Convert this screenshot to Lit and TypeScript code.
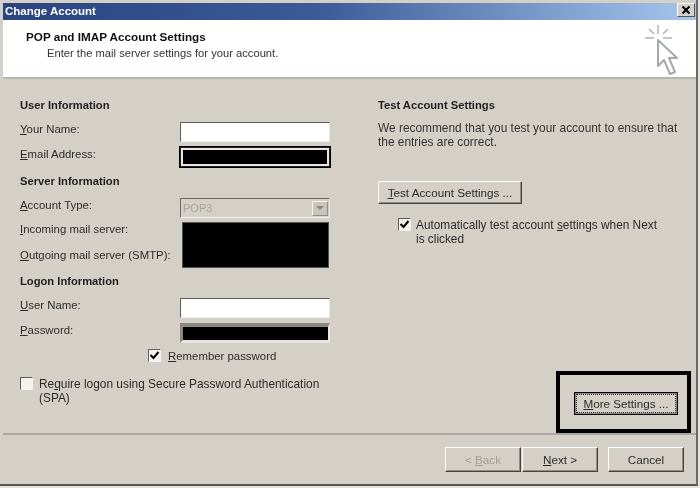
import { LitElement, html, css } from "lit";
import { customElement } from "lit/decorators.js";

const check = html`<svg viewBox="0 0 13 13" width="13" height="13"><path d="M2.5 6l3 3 5-6" fill="none" stroke="#000" stroke-width="2"/></svg>`;

@customElement("app-root")
export class AppRoot extends LitElement {
  static styles = css`
    :host { display: block; width: 700px; height: 488px; overflow: hidden; background: #e4e2dc; }
    * { box-sizing: border-box; }
    .win {
      width: 698px; height: 486px; display: flex; flex-direction: column;
      padding: 3px 0 2px 3px; background: #d4d0c8; border-right: 2px solid #6e6c68; border-bottom: 2px solid #55534f;
      font: 11.4px/14px "Liberation Sans", Arial, sans-serif; color: #2b2b2b; filter: blur(0.4px);
    }
    u { text-decoration: underline; text-underline-offset: 1px; }
    .title {
      height: 17px; flex: none; display: flex; align-items: center; justify-content: space-between; padding: 0 1px 0 2px;
      background: linear-gradient(90deg, #2a4480 0%, #3a5a98 45%, #a6c6ee 100%);
      color: #fff; font-weight: bold; font-size: 11.5px;
    }
    .title > span:first-child { padding-bottom: 2px; }
    .close {
      width: 18px; height: 14px; background: #d4d0c8; display: flex; align-items: center; justify-content: center;
      border: 1px solid; border-color: #fff #555 #555 #fff; margin-bottom: 3px;
    }
    .head {
      height: 59px; flex: none; background: #fff; display: flex; justify-content: space-between;
      border-bottom: 2px solid #b8b5ae; padding: 10px 15px 0 23px;
    }
    .head h1 { margin: 0; font-size: 11.7px; line-height: 14px; font-weight: bold; color: #111; }
    .head p { margin: 2px 0 0 21px; font-size: 11.2px; color: #333; }
    .head svg { margin-top: -5px; margin-right: 1px; }
    .main {
      height: 356px; flex: none; display: flex; padding: 0 3px 0 17px; border-bottom: 2px solid #a9a7a1;
    }
    .left { width: 324px; flex: none; padding-top: 19px; }
    .grid {
      display: grid; grid-template-columns: 160px 150px;
      grid-template-rows: 24px 25px 27px 24px 24px 26px 26px 24px 25px 25px;
      align-items: start;
    }
    h2 { margin: 0; font-size: 11.2px; font-weight: bold; color: #1e1e1e; line-height: 14px; }
    .grid h2 { grid-column: 1 / 3; }
    .field { height: 20px; width: 150px; border: 1px solid; border-color: #5f5e5a #e6e4de #f4f3ef #5f5e5a; background: #fff; }
    .black { background: #000; border: 1px solid #222; outline: 1px solid #000; box-shadow: inset 0 0 0 2px #e8e6e0; }
    .pwd { background: #000; border-top: 4px solid #8a8883; border-left: 3px solid #8a8883; border-right: 2px solid #e8e6e0; border-bottom: 3px solid #e8e6e0; }
    .select {
      background: #d4d0c8; display: flex; align-items: center; justify-content: space-between; padding: 0 1px 0 2px;
      color: #a5a39e; font-size: 11px; border-color: #6a6965 #e6e4de #f4f3ef #6a6965;
    }
    .arrow { width: 16px; height: 15px; background: #c9c6be; border: 1px solid; border-color: #f5f4f0 #8c8a85 #8c8a85 #f5f4f0; display: flex; align-items: center; justify-content: center; }
    .arrow i { border: 4px solid transparent; border-top: 4px solid #8a8883; border-bottom: 0; }
    .span2 { grid-row: span 2; width: 147px; height: 46px; justify-self: end; margin-right: 1px; background: #000; border: 1px solid #55534f; }
    .cb { display: flex; align-items: flex-start; gap: 7px; }
    .box { width: 13px; height: 13px; flex: none; background: #f3f2ee; border: 1px solid; border-color: #5f5e5a #f4f3ef #f4f3ef #5f5e5a; display: flex; }
    .box svg { margin: -1px; }
    .remember { margin: 1px 0 0 128px; }
    .spa { margin-top: 14px; width: 312px; gap: 6px; font-size: 11.9px; }
    .right { flex: 1; display: flex; flex-direction: column; padding: 19px 0 0 34px; }
    .right p { margin: 9px 0 0; width: 310px; color: #333; line-height: 14px; font-size: 11.9px; }
    .btn {
      height: 23px; border: 1px solid; border-color: #fff #45443f #45443f #fff; background: #d4d0c8;
      box-shadow: inset -1px -1px 0 #8f8d88; display: flex; align-items: center; justify-content: center; color: #2a2a2a; font-size: 11.7px;
    }
    .test { width: 144px; margin-top: 32px; }
    .auto { margin: 14px 0 0 20px; width: 265px; gap: 5px; font-size: 11.85px; }
    .hl {
      margin-top: auto; align-self: flex-end; width: 135px; height: 62px; border: 4px solid #000;
      display: flex; align-items: center; justify-content: center; padding: 3px 0 0 5px; margin-right: 2px;
    }
    .more { width: 104px; border: 1px solid #000; outline: 1px dotted #222; outline-offset: -3px; box-shadow: inset 0 0 0 1px #888; }
    .foot { flex: 1; display: flex; justify-content: flex-end; align-items: flex-start; padding: 12px 12px 0 0; }
    .foot .btn { height: 25px; width: 76px; }
    .foot .next { margin-left: 1px; }
    .foot .cancel { margin-left: 10px; }
    .disabled { color: #a09e99; }
  `;

  render() {
    return html`<div class="win">
      <div class="title">
        <span>Change Account</span>
        <span class="close"><svg viewBox="0 0 10 10" width="10" height="10"><path d="M1.5 1.5l7 7M8.5 1.5l-7 7" stroke="#000" stroke-width="2"/></svg></span>
      </div>
      <div class="head">
        <div>
          <h1>POP and IMAP Account Settings</h1>
          <p>Enter the mail server settings for your account.</p>
        </div>
        <svg viewBox="0 0 36 54" width="36" height="54" fill="none">
          <path d="M14 0v9M1 13h9M19 13h9M5 4l5 5M24 4l-5 5" stroke="#a9b4c4" stroke-width="1.5"/>
          <path d="M14 15v26l6-6 6 14 5-2-6-14 8 0z" fill="#fff" stroke="#a8a8a8" stroke-width="2" stroke-linejoin="round"/>
        </svg>
      </div>
      <div class="main">
        <div class="left">
          <div class="grid">
            <h2>User Information</h2>
            <span><u>Y</u>our Name:</span><span class="field"></span>
            <span><u>E</u>mail Address:</span><span class="field black"></span>
            <h2>Server Information</h2>
            <span><u>A</u>ccount Type:</span>
            <span class="field select">POP3<span class="arrow"><i></i></span></span>
            <span><u>I</u>ncoming mail server:</span><span class="span2"></span>
            <span><u>O</u>utgoing mail server (SMTP):</span>
            <h2>Logon Information</h2>
            <span><u>U</u>ser Name:</span><span class="field"></span>
            <span><u>P</u>assword:</span><span class="field pwd"></span>
          </div>
          <div class="cb remember"><span class="box">${check}</span><span><u>R</u>emember password</span></div>
          <div class="cb spa"><span class="box"></span><span>Re<u>q</u>uire logon using Secure Password Authentication (SPA)</span></div>
        </div>
        <div class="right">
          <h2>Test Account Settings</h2>
          <p>We recommend that you test your account to ensure that the entries are correct.</p>
          <div class="btn test"><span><u>T</u>est Account Settings ...</span></div>
          <div class="cb auto"><span class="box">${check}</span><span>Automatically test account <u>s</u>ettings when Next is clicked</span></div>
          <div class="hl"><div class="btn more"><span><u>M</u>ore Settings ...</span></div></div>
        </div>
      </div>
      <div class="foot">
        <div class="btn disabled"><span>&lt; <u>B</u>ack</span></div>
        <div class="btn next"><span><u>N</u>ext &gt;</span></div>
        <div class="btn cancel"><span>Cancel</span></div>
      </div>
    </div>`;
  }
}
